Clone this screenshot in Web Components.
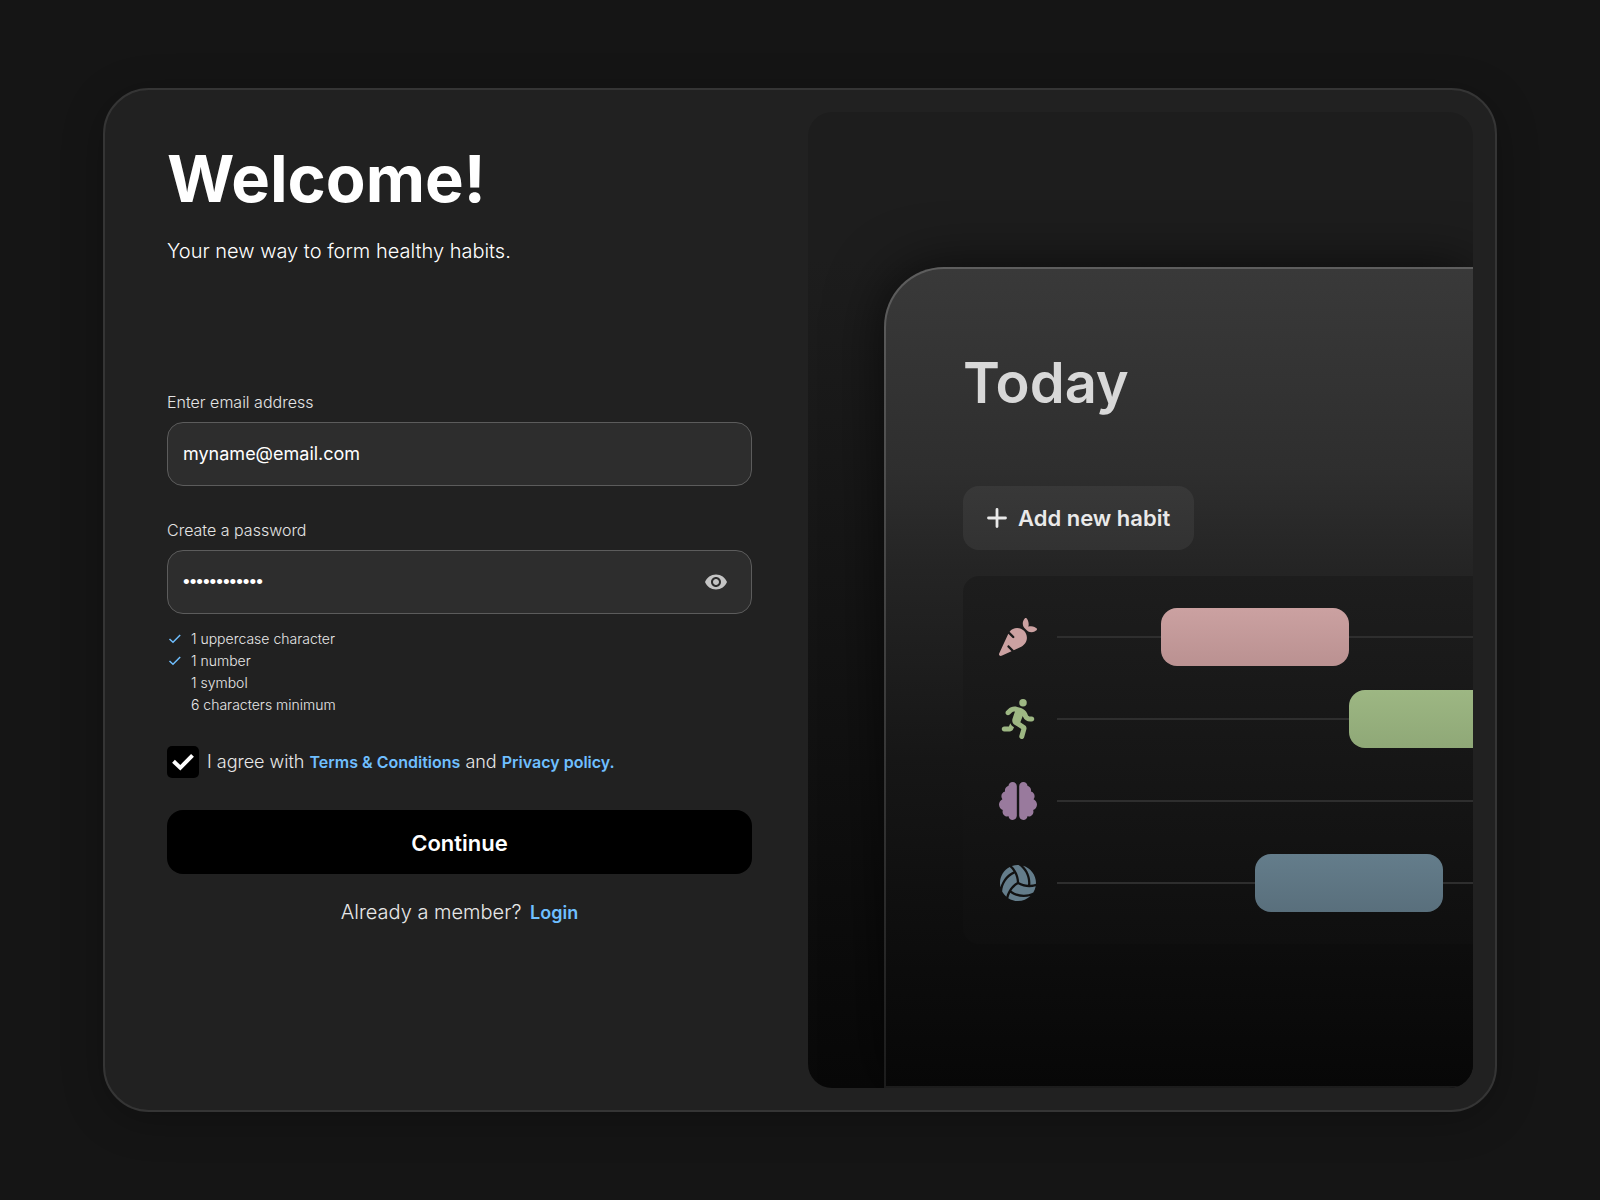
<!DOCTYPE html>
<html lang="en">
<head>
<meta charset="utf-8">
<meta name="viewport" content="width=device-width, initial-scale=1">
<title>Welcome</title>
<style>
  html { background: #151515; }
  body {
    margin: 0;
    min-height: 100vh;
    box-sizing: border-box;
    padding: 88px 103px;
    display: flex;
    font-family: Inter, "Liberation Sans", sans-serif;
    color: #e8e8e8;
  }
</style>
</head>
<body>
<signup-card>
  <signup-form slot="form"></signup-form>
  <habit-preview slot="preview">
    <habit-row icon="carrot" start="104" top="#cba1a1" bottom="#ba9191"></habit-row>
    <habit-row icon="run" start="292" top="#9db783" bottom="#8fa877"></habit-row>
    <habit-row icon="brain" top="#997a9d" bottom="#8f7193"></habit-row>
    <habit-row icon="ball" start="198" top="#647d8b" bottom="#596f7c"></habit-row>
  </habit-preview>
</signup-card>

<script>
  const define = (name, markup, setup) => {
    const template = document.createElement('template');
    template.innerHTML = markup;
    customElements.define(name, class extends HTMLElement {
      constructor() {
        super();
        this.attachShadow({ mode: 'open' }).append(template.content.cloneNode(true));
      }
      connectedCallback() { if (setup) setup(this, this.shadowRoot); }
    });
  };

  define('signup-card', `
    <style>
      :host {
        flex: 1;
        min-width: 0;
        display: grid;
        grid-template-columns: 681fr 665fr;
        box-sizing: border-box;
        padding: 22px;
        background: #212121;
        border: 2px solid #353535;
        border-radius: 46px;
        box-shadow: 0 8px 40px rgba(0, 0, 0, .25);
      }
    </style>
    <slot name="form"></slot>
    <slot name="preview"></slot>`);

  define('text-field', `
    <style>
      :host { display: flex; flex-direction: column; gap: 10px; }
      label { font-size: 16px; line-height: 20px; font-weight: 300; color: #e4e4e4; }
      .box {
        display: flex;
        align-items: center;
        height: 64px;
        box-sizing: border-box;
        padding: 0 23px 0 15px;
        background: #2d2d2d;
        border: 1px solid #5c5c5c;
        border-radius: 16px;
      }
      input {
        flex: 1;
        min-width: 0;
        padding: 0;
        border: 0;
        outline: 0;
        background: none;
        font: 18px/24px Inter, "Liberation Sans", sans-serif;
        color: #fff;
      }
      input[type="password"] { font: 19px/24px "Liberation Sans", sans-serif; }
    </style>
    <label for="input"></label>
    <div class="box"><input id="input"><slot></slot></div>`,
    (host, root) => {
      root.querySelector('label').textContent = host.getAttribute('label');
      const input = root.querySelector('input');
      input.type = host.getAttribute('type');
      input.value = host.getAttribute('value');
    });

  define('reveal-button', `
    <style>
      :host { display: block; }
      button { display: block; padding: 0; border: 0; background: none; color: #c4c4c4; }
      svg { display: block; }
    </style>
    <button type="button" aria-label="Show password">
      <svg width="24" height="24" viewBox="0 0 24 24" fill="currentColor"><path d="M12 4.5C7 4.5 2.73 7.61 1 12c1.73 4.39 6 7.5 11 7.5s9.27-3.11 11-7.5c-1.73-4.39-6-7.5-11-7.5zM12 17c-2.76 0-5-2.24-5-5s2.24-5 5-5 5 2.24 5 5-2.24 5-5 5zm0-8c-1.66 0-3 1.34-3 3s1.34 3 3 3 3-1.34 3-3-1.34-3-3-3z"/></svg>
    </button>`);

  define('rule-item', `
    <style>
      :host { display: flex; align-items: center; gap: 8px; font-size: 14px; line-height: 22px; font-weight: 300; color: #e8e8e8; }
      svg { flex: none; visibility: hidden; }
      :host([met]) svg { visibility: visible; }
    </style>
    <svg width="16" height="16" viewBox="0 0 16 16" fill="none" stroke="#6fbfff" stroke-width="1.5"><path d="M2.5 8 6 11.2 13.2 4"/></svg>
    <span><slot></slot></span>`);

  define('agree-check', `
    <style>
      :host { display: flex; align-items: center; gap: 8px; font-size: 18px; line-height: 24px; font-weight: 300; }
      .tick { display: grid; flex: none; }
      .tick > * { grid-area: 1 / 1; }
      input { appearance: none; width: 32px; height: 32px; margin: 0; border-radius: 5px; background: #000; }
      svg { pointer-events: none; visibility: hidden; }
      input:checked + svg { visibility: visible; }
    </style>
    <span class="tick">
      <input id="agree" type="checkbox" checked>
      <svg width="32" height="32" viewBox="0 0 32 32" fill="none" stroke="#fff" stroke-width="4"><path d="M6.5 15.3 13.3 21.8 25.5 9.3"/></svg>
    </span>
    <label for="agree"><slot></slot></label>`);

  define('primary-button', `
    <style>
      :host { display: block; }
      button {
        display: block;
        width: 100%;
        height: 64px;
        padding: 2px 0 0;
        border: 0;
        border-radius: 16px;
        background: #000;
        color: #fff;
        font: 600 22px/28px Inter, "Liberation Sans", sans-serif;
      }
    </style>
    <button type="submit"><slot></slot></button>`);

  define('signup-form', `
    <style>
      :host { display: block; padding: 31px 56px 0 40px; }
      h1 { margin: 0; font-size: 65px; line-height: 72px; font-weight: 700; color: #fff; }
      .lead { margin: 22px 0 127px; font-size: 20px; line-height: 28px; font-weight: 300; color: #fff; }
      text-field + text-field { margin-top: 34px; }
      .rules { margin: 14px 0 30px; }
      primary-button { margin-top: 32px; }
      a { color: #6fbfff; text-decoration: none; font-weight: 600; font-size: 16px; }
      .member { margin: 23px 0 0; text-align: center; font-size: 20px; line-height: 30px; font-weight: 300; }
      .member a { font-size: 18px; margin-left: 3px; }
    </style>
    <h1>Welcome!</h1>
    <p class="lead">Your new way to form healthy habits.</p>
    <form>
      <text-field label="Enter email address" type="email" value="myname@email.com"></text-field>
      <text-field label="Create a password" type="password" value="Habits2024ab"><reveal-button></reveal-button></text-field>
      <div class="rules">
        <rule-item met>1 uppercase character</rule-item>
        <rule-item met>1 number</rule-item>
        <rule-item>1 symbol</rule-item>
        <rule-item>6 characters minimum</rule-item>
      </div>
      <agree-check>I agree with <a href="#terms">Terms &amp; Conditions</a> and <a href="#privacy">Privacy policy.</a></agree-check>
      <primary-button>Continue</primary-button>
      <p class="member">Already a member? <a href="#login">Login</a></p>
    </form>`);

  define('add-button', `
    <style>
      :host { display: block; }
      button {
        display: flex;
        align-items: center;
        gap: 9px;
        height: 64px;
        padding: 0 24px 0 22px;
        border: 0;
        border-radius: 16px;
        background: linear-gradient(#383838, #323232);
        color: #e9e9e9;
        font: 600 22px/28px Inter, "Liberation Sans", sans-serif;
        white-space: nowrap;
      }
    </style>
    <button type="button">
      <svg width="24" height="24" viewBox="0 0 24 24" fill="none" stroke="currentColor" stroke-width="2.8" stroke-linecap="round"><path d="M12 3.5v17M3.5 12h17"/></svg>
      <slot></slot>
    </button>`);

  define('habit-preview', `
    <style>
      :host {
        display: flex;
        min-width: 0;
        overflow: hidden;
        border-radius: 24px;
        background: linear-gradient(#1d1d1d 15%, #080808);
      }
      .screen {
        flex: 1;
        min-width: 0;
        box-sizing: border-box;
        margin: 155px 0 0 76px;
        padding: 82px 0 0 77px;
        border: 2px solid transparent;
        border-right: 0;
        border-radius: 60px 0 0 0;
        background:
          linear-gradient(#393939, #2e2e2e 25%, #242424 37%, #161616 60%, #0d0d0d 83%, #070707) padding-box,
          linear-gradient(#5e5e5e, #4a4a4a 30%, #1c1c1c) border-box;
        box-shadow: 0 0 56px rgba(0, 0, 0, .65);
      }
      h2 { margin: 0 0 71px; font-size: 56px; line-height: 64px; font-weight: 600; color: #d8d8d8; }
      .chart {
        display: flex;
        flex-direction: column;
        gap: 24px;
        margin-top: 26px;
        padding: 32px 0 32px 35px;
        border-radius: 16px 0 0 16px;
        background: linear-gradient(#1d1d1d, #0f0f0f);
      }
    </style>
    <section class="screen">
      <h2>Today</h2>
      <add-button>Add new habit</add-button>
      <div class="chart"><slot></slot></div>
    </section>`);

  const icons = {
    carrot: ['38', '0 0 512 512', 'M346.7 6C337.6 17 320 42.3 320 72c0 40 15.3 55.3 40 80s40 40 80 40c29.7 0 55-17.6 66-26.7c4-3.3 6-8.2 6-13.3s-2-10-6-13.2c-11.4-9.1-38.3-26.8-74-26.8c-32 0-40 8-40 8s8-8 8-40c0-35.7-17.7-62.6-26.8-74C370 2 365.1 0 360 0s-10 2-13.3 6zM244.6 136c-40 0-77.1 18.1-101.7 48.2l60.5 60.5c6.2 6.2 6.2 16.4 0 22.6s-16.4 6.2-22.6 0l-55.3-55.3 0 .1L2.2 477.9C-2 487-.1 497.8 7 505s17.9 9 27.1 4.8l134.7-62.4-52.1-52.1c-6.2-6.2-6.2-16.4 0-22.6s16.4-6.2 22.6 0L199.7 433l100.2-46.4c46.4-21.5 76.2-68 76.2-119.2C376 194.8 317.2 136 244.6 136z'],
    run: ['40', '-16 0 448 512', 'M320 48a48 48 0 1 0 -96 0 48 48 0 1 0 96 0zM125.7 175.5c9.9-9.9 23.4-15.5 37.5-15.5c1.9 0 3.8 .1 5.6 .3L137.6 254c-9.3 28 1.7 58.8 26.8 74.5l86.2 53.9-25.4 88.8c-4.9 17 5 34.7 22 39.6s34.7-5 39.6-22l28.7-100.4c5.9-20.6-2.6-42.6-20.7-53.9L238 299l30.9-82.4 5.1 12.3C289 264.7 323.9 288 362.7 288H384c17.7 0 32-14.3 32-32s-14.3-32-32-32H362.7c-12.9 0-24.6-7.8-29.5-19.7l-6.3-15c-14.6-35.1-44.1-61.9-80.5-73.1l-48.7-15c-11.1-3.4-22.7-5.2-34.4-5.2c-31 0-60.8 12.3-82.7 34.3L57.4 153.4c-12.5 12.5-12.5 32.8 0 45.3s32.8 12.5 45.3 0l23.1-23.1zM91.2 352H32c-17.7 0-32 14.3-32 32s14.3 32 32 32h69.6c19 0 36.2-11.2 43.9-28.5L157 361.6l-9.5-6c-17.5-10.9-30.5-26.8-37.9-44.9L91.2 352z'],
    brain: ['38', '0 0 512 512', 'M184 0c30.9 0 56 25.1 56 56V456c0 30.9-25.1 56-56 56c-28.9 0-52.7-21.9-55.7-50.1c-5.2 1.4-10.7 2.1-16.3 2.1c-35.3 0-64-28.7-64-64c0-7.4 1.3-14.6 3.6-21.2C21.4 367.4 0 338.2 0 304c0-31.9 18.7-59.5 45.8-72.3C37.1 220.8 32 207 32 192c0-30.7 21.6-56.3 50.4-62.6C80.8 123.9 80 118 80 112c0-29.9 20.6-55.1 48.3-62.1C131.3 21.9 155.1 0 184 0zM328 0c28.9 0 52.6 21.9 55.7 49.9c27.8 7 48.3 32.1 48.3 62.1c0 6-.8 11.9-2.4 17.4c28.8 6.2 50.4 31.9 50.4 62.6c0 15-5.1 28.8-13.8 39.7C493.3 244.5 512 272.1 512 304c0 34.2-21.4 63.4-51.6 74.8c2.3 6.6 3.6 13.8 3.6 21.2c0 35.3-28.7 64-64 64c-5.6 0-11.1-.7-16.3-2.1c-3 28.2-26.8 50.1-55.7 50.1c-30.9 0-56-25.1-56-56V56c0-30.9 25.1-56 56-56z'],
    ball: ['36', '0 0 512 512', 'M511.8 267.4c-26.1 8.7-53.4 13.8-81 15.1c9.2-105.3-31.5-204.2-103.2-272.4C434.1 41.1 512 139.5 512 256c0 3.8-.1 7.6-.2 11.4zm-3.9 34.7c-5.8 32-17.6 62-34.2 88.7c-97.5 48.5-217.7 42.6-311.9-24.5c23.7-36.2 55.4-67.7 94.5-91.8c79.9 43.2 170.1 50.8 251.6 27.6zm-236-55.5c-2.5-90.9-41.1-172.7-101.9-231.7C196.8 5.2 225.8 0 256 0c2.7 0 5.3 0 7.9 .1c90.8 60.2 145.7 167.2 134.7 282.3c-43.1-2.4-86.4-14.1-126.8-35.9zM138 28.8c20.6 18.3 38.7 39.4 53.7 62.6C95.9 136.1 30.6 220.8 7.3 316.9C2.5 297.4 0 277 0 256C0 157.2 56 71.5 138 28.8zm69.6 90.5c19.5 38.6 31 81.9 32.3 127.7C162.5 294.6 110.9 368.9 90.2 451C66 430.4 45.6 405.4 30.4 377.2c6.7-108.7 71.4-209.9 177.1-257.9zM256 512c-50.7 0-98-14.8-137.8-40.2c5.6-27 14.8-53.1 27.4-77.7C232.2 454.6 338.1 468.8 433 441c-46 44-108.3 71-177 71z']
  };

  define('habit-row', `
    <style>
      :host { display: flex; align-items: center; gap: 19px; height: 58px; }
      svg { flex: none; width: 40px; fill: var(--top); }
      .track {
        flex: 1;
        display: flex;
        min-width: 0;
        height: 58px;
        background: linear-gradient(#2e2e2e, #2e2e2e) center / 100% 2px no-repeat;
      }
      .bar {
        flex: none;
        width: 188px;
        border-radius: 16px;
        background: linear-gradient(var(--top), var(--bottom));
      }
    </style>
    <svg aria-hidden="true"><path/></svg>
    <div class="track"></div>`,
    (host, root) => {
      const [size, box, path] = icons[host.getAttribute('icon')];
      const svg = root.querySelector('svg');
      svg.setAttribute('height', size);
      svg.setAttribute('viewBox', box);
      svg.firstElementChild.setAttribute('d', path);
      host.style.setProperty('--top', host.getAttribute('top'));
      host.style.setProperty('--bottom', host.getAttribute('bottom'));
      if (host.hasAttribute('start')) {
        const bar = document.createElement('div');
        bar.className = 'bar';
        bar.style.marginLeft = host.getAttribute('start') + 'px';
        root.querySelector('.track').append(bar);
      }
    });
</script>
</body>
</html>
